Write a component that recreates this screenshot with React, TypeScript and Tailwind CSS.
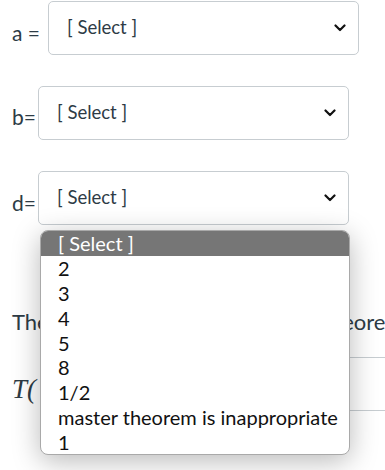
import React from 'react';

const options = ['[ Select ]', '2', '3', '4', '5', '8', '1/2', 'master theorem is inappropriate', '1'];

const Chevron: React.FC = () => (
  <svg width="12" height="8" viewBox="0 0 12 8" className="shrink-0">
    <path d="M1.5 1.5 L6 6 L10.5 1.5" fill="none" stroke="#111" strokeWidth="2.2" strokeLinecap="round" strokeLinejoin="round" />
  </svg>
);

const FakeSelect: React.FC<{ width: string }> = ({ width }) => (
  <div className={`${width} h-[54px] flex items-center justify-between pl-[18px] pr-[12px] border border-[#c7cdd1] rounded-[5px] bg-white`}>
    <span className="text-[18.5px] text-[#2d3b45] leading-none pb-[1px]">[ Select ]</span>
    <Chevron />
  </div>
);

export default function App() {
  return (
    <div className="relative w-[385px] h-[470px] overflow-hidden bg-white text-[#2d3b45] font-['Lato','Noto_Sans',sans-serif]">
      <div className="flex flex-col pt-[1px]">
        <div className="flex items-end">
          <span className="pl-[12px] w-[48px] text-[21px] leading-none pb-[12px] whitespace-nowrap">a =</span>
          <FakeSelect width="w-[311px]" />
        </div>
        <div className="flex items-end mt-[31px]">
          <span className="pl-[12px] w-[38px] text-[21px] leading-none pb-[13px]">b=</span>
          <FakeSelect width="w-[311px]" />
        </div>
        <div className="flex items-end mt-[31px]">
          <span className="pl-[12px] w-[38px] text-[21px] leading-none pb-[12px]">d=</span>
          <FakeSelect width="w-[311px]" />
        </div>

        <p className="mt-[86px] pl-[12px] text-[22px] leading-none whitespace-nowrap">
          The recurrence suits the master theorem
        </p>

        <div className="mt-[24px] ml-[60px] border-t border-b border-[#c7cdd1] h-[54px]" />
        <span className="absolute left-[12px] top-[376px] text-[27px] italic font-['Liberation_Serif',serif] leading-none">T(</span>
      </div>

      {/* open native dropdown list */}
      <div className="absolute left-[40px] top-[230px] w-[310px] bg-white border border-[#a9a9a9] rounded-[8px] overflow-hidden shadow-[0_6px_28px_rgba(0,0,0,0.28)]">
        {options.map((opt, i) => (
          <div
            key={opt}
            className={`h-[24.8px] flex items-center pl-[17px] text-[20px] leading-none ${
              i === 0 ? 'bg-[#767676] text-white' : 'text-[#111]'
            }`}
          >
            {opt}
          </div>
        ))}
      </div>
    </div>
  );
}
